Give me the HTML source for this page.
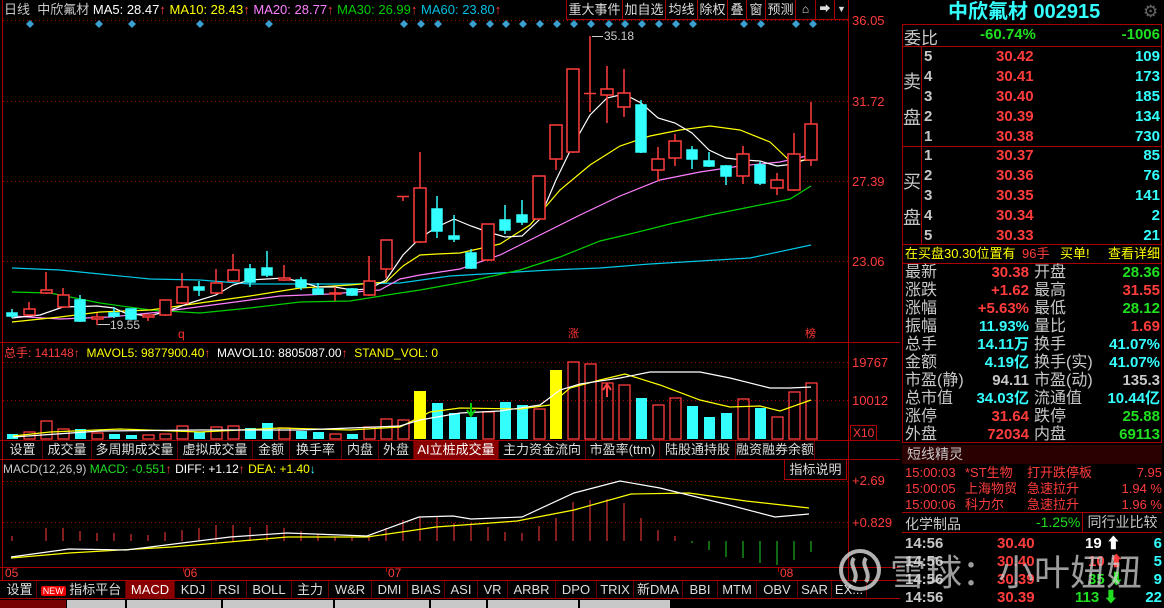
<!DOCTYPE html>
<html><head><meta charset="utf-8"><style>
*{margin:0;padding:0;box-sizing:border-box}
body{width:1164px;height:608px;background:#000;overflow:hidden;position:relative;font-family:"Liberation Sans","Noto Sans CJK SC",sans-serif;color:#c8c8c8}
.a{position:absolute;white-space:nowrap}
.tb{position:absolute;top:0;height:20px;border:1px solid #a00;border-top:none;color:#ddd;font-size:13px;line-height:19px;text-align:center;background:#000}
.r{color:#ff3c3c}.g{color:#1fe01f}.c{color:#3ff}.y{color:#ff0}.w{color:#fff}.gr{color:#c8c8c8}
.tab{position:absolute;top:441px;height:18px;line-height:18px;font-size:13px;color:#ddd;text-align:center;border-right:1px solid #600}
.bt{position:absolute;top:581px;height:18px;line-height:18px;font-size:13px;color:#ddd;text-align:center;border-right:1px solid #600}
.st span{font-size:16px}
.st b{font-size:15px}
</style></head><body>
<svg class="a" style="left:0;top:0" width="900" height="608">
<g stroke="#a00" fill="none">
<line x1="2.5" y1="0" x2="2.5" y2="580"/>
<line x1="848.5" y1="0" x2="848.5" y2="580"/>
<line x1="0" y1="342.5" x2="900" y2="342.5"/>
<line x1="0" y1="440.5" x2="900" y2="440.5"/>
<line x1="0" y1="459.5" x2="900" y2="459.5"/>
<line x1="0" y1="567.5" x2="900" y2="567.5"/>
<line x1="0" y1="580.5" x2="900" y2="580.5"/>
<line x1="0" y1="598.5" x2="900" y2="598.5"/>
</g>
<g stroke="#a00" stroke-dasharray="1,3">
<line x1="3" y1="20.5" x2="848" y2="20.5"/>
<line x1="3" y1="101.5" x2="848" y2="101.5"/>
<line x1="3" y1="181.5" x2="848" y2="181.5"/>
<line x1="3" y1="261.5" x2="848" y2="261.5"/>
<line x1="3" y1="362.5" x2="848" y2="362.5"/>
<line x1="3" y1="400.5" x2="848" y2="400.5"/>
<line x1="3" y1="481.5" x2="848" y2="481.5"/>
<line x1="3" y1="522.5" x2="848" y2="522.5"/>
</g>
<g fill="#3aa0d0">
<path d="M30 20l4 4-4 4-4-4zM99 20l4 4-4 4-4-4zM132 20l4 4-4 4-4-4zM200 20l4 4-4 4-4-4zM269 20l4 4-4 4-4-4zM404 20l4 4-4 4-4-4zM421 20l4 4-4 4-4-4zM438 20l4 4-4 4-4-4zM473 20l4 4-4 4-4-4zM490 20l4 4-4 4-4-4zM506 20l4 4-4 4-4-4zM523 20l4 4-4 4-4-4zM540 20l4 4-4 4-4-4zM557 20l4 4-4 4-4-4zM574 20l4 4-4 4-4-4zM591 20l4 4-4 4-4-4zM609 20l4 4-4 4-4-4zM625 20l4 4-4 4-4-4zM642 20l4 4-4 4-4-4zM659 20l4 4-4 4-4-4zM676 20l4 4-4 4-4-4zM693 20l4 4-4 4-4-4zM744 20l4 4-4 4-4-4zM761 20l4 4-4 4-4-4zM796 20l4 4-4 4-4-4zM813 20l4 4-4 4-4-4z"/>
</g>
<g fill="none" stroke-width="1.2">
<polyline stroke="#00c8e6" points="12,268 60,270 100,274 150,279 200,280 250,284 300,284 350,284 400,283 450,276 500,273 550,270 600,268 650,264 700,261 750,258 811,245"/>
<polyline stroke="#00d000" points="12,292 50,293 100,303 150,310 200,313 250,308 300,302 350,301 400,293 420,290 470,281 520,270 560,257 600,241 630,234 670,224 710,215 750,207 790,199 811,186"/>
<polyline stroke="#ff80ff" points="12,316 60,319 110,317 160,312 220,304 280,296 330,294 380,290 400,279 420,275 460,269 500,255 540,235 580,215 620,196 660,180 700,172 740,166 780,162 811,155"/>
<polyline stroke="#ffff00" points="12,322 60,317 100,312 150,310 200,303 250,296 300,288 350,285 386,282 403,266 420,255 437,254 460,253 500,244 530,225 560,190 590,165 620,146 650,136 680,130 710,126 740,130 770,142 790,161 811,160"/>
<polyline stroke="#ffffff" points="12,318 40,315 63,307 97,306 114,308 125,313 148,316 165,312 190,303 216,295 233,285 250,280 284,278 301,282 318,287 335,287 352,290 369,289 386,280 403,255 420,238 437,227 454,219 471,226 488,232 505,237 522,236 539,220 556,180 573,145 590,115 607,98 624,94 641,103 658,118 675,123 692,133 709,150 726,158 743,160 760,161 777,166 794,164 811,157"/>
</g>
<g stroke-width="1.5">
<g stroke="#3ff" fill="#3ff">
<line x1="12" y1="309" x2="12" y2="318"/><rect x="7" y="313" width="10" height="3"/>
<line x1="80" y1="295" x2="80" y2="322"/><rect x="75" y="300" width="10" height="21"/>
<line x1="114" y1="307" x2="114" y2="318"/><rect x="109" y="313" width="10" height="3"/>
<line x1="131" y1="309" x2="131" y2="320"/><rect x="126" y="309" width="10" height="10"/>
<line x1="199" y1="281" x2="199" y2="296"/><rect x="194" y="287" width="10" height="3"/>
<line x1="250" y1="264" x2="250" y2="287"/><rect x="245" y="269" width="10" height="13"/>
<line x1="267" y1="251" x2="267" y2="277"/><rect x="262" y="268" width="10" height="7"/>
<line x1="301" y1="277" x2="301" y2="290"/><rect x="296" y="280" width="10" height="7"/>
<line x1="318" y1="283" x2="318" y2="295"/><rect x="313" y="289" width="10" height="5"/>
<line x1="352" y1="288" x2="352" y2="296"/><rect x="347" y="289" width="10" height="6"/>
<line x1="437" y1="196" x2="437" y2="238"/><rect x="432" y="209" width="10" height="22"/>
<line x1="454" y1="215" x2="454" y2="242"/><rect x="449" y="236" width="10" height="3"/>
<line x1="471" y1="249" x2="471" y2="269"/><rect x="466" y="253" width="10" height="15"/>
<line x1="505" y1="205" x2="505" y2="234"/><rect x="500" y="220" width="10" height="10"/>
<line x1="522" y1="200" x2="522" y2="225"/><rect x="517" y="215" width="10" height="7"/>
<line x1="641" y1="100" x2="641" y2="153"/><rect x="636" y="105" width="10" height="47"/>
<line x1="692" y1="146" x2="692" y2="169"/><rect x="687" y="150" width="10" height="9"/>
<line x1="709" y1="152" x2="709" y2="167"/><rect x="704" y="161" width="10" height="5"/>
<line x1="726" y1="165" x2="726" y2="185"/><rect x="721" y="166" width="10" height="10"/>
<line x1="760" y1="162" x2="760" y2="185"/><rect x="755" y="165" width="10" height="18"/>
</g>
<g stroke="#ff3c3c" fill="#000">
<line x1="29" y1="302" x2="29" y2="316"/><rect x="24" y="309" width="11" height="6"/>
<line x1="46" y1="272" x2="46" y2="294"/><rect x="41" y="290" width="11" height="3"/>
<line x1="63" y1="288" x2="63" y2="308"/><rect x="58" y="295" width="11" height="12"/>
<line x1="97" y1="313" x2="97" y2="325"/><rect x="92" y="317" width="11" height="2"/>
<line x1="148" y1="315" x2="148" y2="321"/><rect x="143" y="315" width="11" height="2"/>
<line x1="165" y1="300" x2="165" y2="316"/><rect x="160" y="300" width="11" height="15"/>
<line x1="182" y1="273" x2="182" y2="304"/><rect x="177" y="287" width="11" height="16"/>
<line x1="216" y1="269" x2="216" y2="294"/><rect x="211" y="283" width="11" height="10"/>
<line x1="233" y1="254" x2="233" y2="282"/><rect x="228" y="270" width="11" height="11"/>
<line x1="284" y1="265" x2="284" y2="281"/><rect x="279" y="278" width="11" height="2"/>
<line x1="335" y1="287" x2="335" y2="301"/><rect x="330" y="293" width="11" height="1"/>
<line x1="369" y1="256" x2="369" y2="296"/><rect x="364" y="281" width="11" height="14"/>
<line x1="386" y1="240" x2="386" y2="278"/><rect x="381" y="240" width="11" height="29"/>
<line x1="403" y1="196" x2="403" y2="201"/><line x1="397" y1="196.5" x2="409" y2="196.5"/>
<line x1="420" y1="152" x2="420" y2="243"/><rect x="414" y="188" width="12" height="54"/>
<line x1="488" y1="224" x2="488" y2="261"/><rect x="482" y="224" width="12" height="36"/>
<line x1="539" y1="176" x2="539" y2="220"/><rect x="533" y="176" width="12" height="43"/>
<line x1="556" y1="125" x2="556" y2="170"/><rect x="550" y="125" width="12" height="34"/>
<line x1="573" y1="69" x2="573" y2="153"/><rect x="567" y="69" width="12" height="83"/>
<line x1="590" y1="36" x2="590" y2="112"/><line x1="584" y1="93.5" x2="596" y2="93.5"/>
<line x1="607" y1="66" x2="607" y2="123"/><rect x="601" y="89" width="12" height="6"/>
<line x1="624" y1="69" x2="624" y2="117"/><rect x="618" y="93" width="12" height="14"/>
<line x1="658" y1="147" x2="658" y2="181"/><rect x="652" y="159" width="12" height="11"/>
<line x1="675" y1="134" x2="675" y2="166"/><rect x="669" y="141" width="12" height="17"/>
<line x1="743" y1="146" x2="743" y2="184"/><rect x="737" y="154" width="12" height="22"/>
<line x1="777" y1="173" x2="777" y2="195"/><rect x="771" y="180" width="12" height="8"/>
<line x1="794" y1="133" x2="794" y2="191"/><rect x="788" y="154" width="12" height="36"/>
<line x1="811" y1="102" x2="811" y2="166"/><rect x="805" y="124" width="12" height="36"/>
</g>
</g>
<g stroke="#ccc"><line x1="592" y1="36.5" x2="603" y2="36.5"/><line x1="98" y1="324.5" x2="110" y2="324.5"/></g>
<text x="604" y="40" fill="#ccc" font-size="12">35.18</text>
<text x="110" y="329" fill="#ccc" font-size="12">19.55</text>
<text x="178" y="338" fill="#f33" font-size="12">q</text>
<text x="568" y="337" fill="#f33" font-size="11">涨</text>
<text x="805" y="337" fill="#f33" font-size="11">榜</text>
<g stroke-width="1.3">
<g fill="#3ff">
<rect x="7" y="434" width="11" height="5"/><rect x="75" y="429" width="11" height="10"/><rect x="109" y="434" width="11" height="5"/><rect x="126" y="435" width="11" height="4"/><rect x="194" y="432" width="11" height="7"/><rect x="245" y="428" width="11" height="11"/><rect x="262" y="423" width="11" height="16"/><rect x="296" y="431" width="11" height="8"/><rect x="313" y="432" width="11" height="7"/><rect x="347" y="434" width="11" height="5"/><rect x="432" y="403" width="11" height="36"/><rect x="449" y="413" width="11" height="26"/><rect x="466" y="417" width="11" height="22"/><rect x="500" y="402" width="11" height="37"/><rect x="517" y="405" width="11" height="34"/><rect x="636" y="398" width="11" height="41"/><rect x="687" y="406" width="11" height="33"/><rect x="704" y="417" width="11" height="22"/><rect x="721" y="413" width="11" height="26"/><rect x="755" y="408" width="11" height="31"/>
</g>
<g fill="#ff0"><rect x="414" y="391" width="12" height="48"/><rect x="550" y="370" width="12" height="69"/></g>
<g fill="none" stroke="#ff3c3c">
<rect x="24" y="432" width="11" height="7"/><rect x="41" y="421" width="11" height="18"/><rect x="58" y="429" width="11" height="10"/><rect x="92" y="433" width="11" height="6"/><rect x="143" y="435" width="11" height="4"/><rect x="160" y="434" width="11" height="5"/><rect x="177" y="426" width="11" height="13"/><rect x="211" y="427" width="11" height="12"/><rect x="228" y="426" width="11" height="13"/><rect x="279" y="428" width="11" height="11"/><rect x="330" y="434" width="11" height="5"/><rect x="364" y="427" width="11" height="12"/><rect x="381" y="419" width="11" height="20"/><rect x="398" y="420" width="11" height="19"/><rect x="483" y="412" width="11" height="27"/><rect x="534" y="409" width="11" height="30"/><rect x="568" y="362" width="11" height="77"/><rect x="585" y="364" width="11" height="75"/><rect x="602" y="383" width="11" height="56"/><rect x="619" y="385" width="11" height="54"/><rect x="653" y="405" width="11" height="34"/><rect x="670" y="398" width="11" height="41"/><rect x="738" y="399" width="11" height="40"/><rect x="772" y="417" width="11" height="22"/><rect x="789" y="392" width="11" height="47"/><rect x="806" y="383" width="11" height="56"/>
</g>
</g>
<g fill="none" stroke-width="1.2">
<polyline stroke="#ff0" points="13,436 50,432 120,429 200,432 280,428 350,430 400,427 430,412 460,408 520,409 550,405 570,388 600,380 625,374 660,385 700,400 730,407 760,406 780,411 811,400"/>
<polyline stroke="#fff" points="13,437 100,431 200,430 300,430 400,426 420,420 460,413 500,411 540,405 560,390 580,384 620,378 650,372 700,372 730,378 770,388 790,388 811,387"/>
</g>
<path d="M471 403v11M467 410l4 6 4-6" stroke="#0c0" stroke-width="2" fill="none"/>
<path d="M607 397v-11M603 390l4-6 4 6" stroke="#f44" stroke-width="2" fill="none"/>
<g stroke="#ff3c3c" stroke-width="1">
<path d="M12 541V536M46 541V528M63 541V528M80 541V531M97 541V533M114 541V533M131 541V534M148 541V535M165 541V532M182 541V530M199 541V528M216 541V525M233 541V525M250 541V527M267 541V525M284 541V528M301 541V531M318 541V534M335 541V537M352 541V537M369 541V537M386 541V528M403 541V520M420 541V517M437 541V516M454 541V523M471 541V523M488 541V527M505 541V532M522 541V533M539 541V526M556 541V518M573 541V502M590 541V500M607 541V499M624 541V503M641 541V518M658 541V530M675 541V536"/>
</g>
<g stroke="#1fd01f"><path d="M692 541V543M709 541V550M726 541V557M743 541V558M760 541V563M777 541V565M794 541V560M811 541V552"/></g>
<g fill="none" stroke-width="1.2">
<polyline stroke="#ff0" points="11,558 69,553 172,547 287,537 367,537 436,527 517,521 574,510 631,494 689,493 746,501 809,508"/>
<polyline stroke="#fff" points="11,557 69,549 126,550 230,537 287,533 367,536 419,517 453,516 471,519 522,517 574,493 620,481 660,488 729,505 775,517 809,514"/>
</g>
<g stroke="#a00"><line x1="183.5" y1="567" x2="183.5" y2="572"/><line x1="386.5" y1="567" x2="386.5" y2="572"/><line x1="778.5" y1="567" x2="778.5" y2="572"/></g>
</svg>

<div class="a" style="left:4px;top:2px;font-size:13px;line-height:16px"><span class="gr">日线&nbsp; 中欣氟材</span> <span class="w">MA5: 28.47</span><span class="r">↑</span> <span class="y">MA10: 28.43</span><span class="r">↑</span> <span style="color:#ff80ff">MA20: 28.77</span><span class="r">↑</span> <span style="color:#0c0">MA30: 26.99</span><span class="r">↑</span> <span style="color:#00c0e0">MA60: 23.80</span><span class="r">↑</span></div>
<div class="tb" style="left:566px;width:57px">重大事件</div>
<div class="tb" style="left:622px;width:44px">加自选</div>
<div class="tb" style="left:665px;width:33px">均线</div>
<div class="tb" style="left:697px;width:31px">除权</div>
<div class="tb" style="left:727px;width:20px">叠</div>
<div class="tb" style="left:746px;width:20px">窗</div>
<div class="tb" style="left:765px;width:31px">预测</div>
<div class="tb" style="left:795px;width:21px;font-size:12px">⌂</div>
<div class="tb" style="left:815px;width:20px;font-size:11px">➡</div>
<div class="tb" style="left:834px;width:15px;font-size:9px">▼</div>
<div class="a r" style="left:852px;top:13px;font-size:13px">36.05</div>
<div class="a r" style="left:852px;top:94px;font-size:13px">31.72</div>
<div class="a r" style="left:852px;top:174px;font-size:13px">27.39</div>
<div class="a r" style="left:852px;top:254px;font-size:13px">23.06</div>
<div class="a" style="left:4px;top:344px;font-size:12px"><span class="r">总手: 141148↑</span>&nbsp; <span class="y">MAVOL5: 9877900.40</span><span class="r">↑</span>&nbsp; <span class="w">MAVOL10: 8805087.00</span><span class="r">↑</span>&nbsp; <span class="y">STAND_VOL: 0</span></div>
<div class="a r" style="left:852px;top:355px;font-size:13px">19767</div>
<div class="a r" style="left:852px;top:393px;font-size:13px">10012</div>
<div class="a r" style="left:850px;top:425px;font-size:12px;border:1px solid #a00;padding:0 2px">X10</div>
<div class="tab" style="left:3px;width:40px">设置</div>
<div class="tab" style="left:43px;width:49px">成交量</div>
<div class="tab" style="left:92px;width:86px">多周期成交量</div>
<div class="tab" style="left:178px;width:75px">虚拟成交量</div>
<div class="tab" style="left:253px;width:37px">金额</div>
<div class="tab" style="left:290px;width:52px">换手率</div>
<div class="tab" style="left:342px;width:37px">内盘</div>
<div class="tab" style="left:379px;width:35px">外盘</div>
<div class="tab" style="left:414px;width:85px;background:#800;color:#fff">AI立桩成交量</div>
<div class="tab" style="left:499px;width:87px">主力资金流向</div>
<div class="tab" style="left:586px;width:74px">市盈率(ttm)</div>
<div class="tab" style="left:660px;width:76px">陆股通持股</div>
<div class="tab" style="left:736px;width:79px">融资融券余额</div>
<div class="a" style="left:3px;top:462px;font-size:12px"><span class="gr">MACD(12,26,9)</span> <span class="g">MACD: -0.551</span><span class="r">↑</span> <span class="w">DIFF: +1.12</span><span class="r">↑</span> <span class="y">DEA: +1.40</span><span class="c">↓</span></div>
<div class="a" style="left:784px;top:460px;width:63px;height:20px;border:1px solid #a00;border-top:none;font-size:13px;line-height:19px;text-align:center;color:#ddd">指标说明</div>
<div class="a r" style="left:852px;top:473px;font-size:13px">+2.69</div>
<div class="a r" style="left:852px;top:515px;font-size:13px">+0.829</div>
<div class="a r" style="left:5px;top:566px;font-size:12px">05</div>
<div class="a r" style="left:184px;top:566px;font-size:12px">06</div>
<div class="a r" style="left:388px;top:566px;font-size:12px">07</div>
<div class="a r" style="left:780px;top:566px;font-size:12px">08</div>
<div class="bt" style="left:3px;width:34px">设置</div>
<div class="bt" style="left:37px;width:89px"><span style="background:#e00;color:#fff;font-size:9px;padding:0 2px;border-radius:2px">NEW</span> 指标平台</div>
<div class="bt" style="left:126px;width:49px;background:#800;color:#fff">MACD</div>
<div class="bt" style="left:175px;width:37px">KDJ</div>
<div class="bt" style="left:212px;width:35px">RSI</div>
<div class="bt" style="left:247px;width:45px">BOLL</div>
<div class="bt" style="left:292px;width:37px">主力</div>
<div class="bt" style="left:329px;width:43px">W&amp;R</div>
<div class="bt" style="left:372px;width:36px">DMI</div>
<div class="bt" style="left:408px;width:37px">BIAS</div>
<div class="bt" style="left:445px;width:33px">ASI</div>
<div class="bt" style="left:478px;width:30px">VR</div>
<div class="bt" style="left:508px;width:48px">ARBR</div>
<div class="bt" style="left:556px;width:41px">DPO</div>
<div class="bt" style="left:597px;width:37px">TRIX</div>
<div class="bt" style="left:634px;width:49px">新DMA</div>
<div class="bt" style="left:683px;width:35px">BBI</div>
<div class="bt" style="left:718px;width:39px">MTM</div>
<div class="bt" style="left:757px;width:41px">OBV</div>
<div class="bt" style="left:798px;width:34px">SAR</div>
<div class="bt" style="left:832px;width:35px">EX...</div>
<div class="a" style="left:0;top:600px;width:900px;height:8px;background:#000">
<div class="a" style="left:0;top:0;width:66px;height:8px;background:#700"></div>
<div class="a" style="left:67px;top:0;width:58px;height:8px;background:#c8c8c8"></div>
<div class="a" style="left:127px;top:0;width:94px;height:8px;background:#c8c8c8"></div>
<div class="a" style="left:223px;top:0;width:110px;height:8px;background:#c8c8c8"></div>
<div class="a" style="left:335px;top:0;width:94px;height:8px;background:#c8c8c8"></div>
<div class="a" style="left:431px;top:0;width:55px;height:8px;background:#c8c8c8"></div>
<div class="a" style="left:488px;top:0;width:90px;height:8px;background:#c8c8c8"></div>
<div class="a" style="left:580px;top:0;width:90px;height:8px;background:#c8c8c8"></div>
</div>

<div class="a c" style="left:948px;top:0px;font-size:20px;font-weight:bold;line-height:24px">中欣氟材 002915</div>
<div class="a" style="left:1143px;top:2px;font-size:17px;color:#666">⚙</div>
<div class="a" style="left:902px;top:24px;width:260px;height:419px;border:1px solid #a00"></div>
<div class="a" style="left:902px;top:46px;width:260px;border-top:1px solid #a00"></div>
<div class="a" style="left:902px;top:146px;width:260px;border-top:1px solid #a00"></div>
<div class="a" style="left:902px;top:244px;width:260px;border-top:1px solid #a00"></div>
<div class="a" style="left:902px;top:263px;width:260px;border-top:1px solid #a00"></div>
<div class="a" style="left:921px;top:46px;height:198px;border-left:1px solid #a00"></div>
<div class="a gr" style="left:904px;top:24px;font-size:17px">委比</div>
<div class="a g" style="left:980px;top:26px;font-size:15px;font-weight:bold">-60.74%</div>
<div class="a g" style="left:1100px;top:26px;width:60px;text-align:right;font-size:15px;font-weight:bold">-1006</div>
<div class="a gr" style="left:903px;top:64px;font-size:18px;line-height:36px">卖<br>盘</div>
<div class="a gr" style="left:903px;top:164px;font-size:18px;line-height:36px">买<br>盘</div>
<div class="a" style="left:924px;top:47px;width:236px;font-size:15px;font-weight:bold;line-height:20px">
<div style="position:relative;height:20px"><span class="gr">5</span><span class="r" style="position:absolute;left:72px">30.42</span><span class="c" style="position:absolute;right:0">109</span></div>
<div style="position:relative;height:20px"><span class="gr">4</span><span class="r" style="position:absolute;left:72px">30.41</span><span class="c" style="position:absolute;right:0">173</span></div>
<div style="position:relative;height:20px"><span class="gr">3</span><span class="r" style="position:absolute;left:72px">30.40</span><span class="c" style="position:absolute;right:0">185</span></div>
<div style="position:relative;height:20px"><span class="gr">2</span><span class="r" style="position:absolute;left:72px">30.39</span><span class="c" style="position:absolute;right:0">134</span></div>
<div style="position:relative;height:20px"><span class="gr">1</span><span class="r" style="position:absolute;left:72px">30.38</span><span class="c" style="position:absolute;right:0">730</span></div>
<div style="position:relative;height:20px;margin-top:-1px"><span class="gr">1</span><span class="r" style="position:absolute;left:72px">30.37</span><span class="c" style="position:absolute;right:0">85</span></div>
<div style="position:relative;height:20px"><span class="gr">2</span><span class="r" style="position:absolute;left:72px">30.36</span><span class="c" style="position:absolute;right:0">76</span></div>
<div style="position:relative;height:20px"><span class="gr">3</span><span class="r" style="position:absolute;left:72px">30.35</span><span class="c" style="position:absolute;right:0">141</span></div>
<div style="position:relative;height:20px"><span class="gr">4</span><span class="r" style="position:absolute;left:72px">30.34</span><span class="c" style="position:absolute;right:0">2</span></div>
<div style="position:relative;height:20px"><span class="gr">5</span><span class="r" style="position:absolute;left:72px">30.33</span><span class="c" style="position:absolute;right:0">21</span></div>
</div>
<div class="a" style="left:905px;top:245px;width:255px;font-size:13px;line-height:18px;position:absolute"><span class="y">在买盘30.30位置有</span><span class="r" style="position:absolute;left:117px">96手</span><span class="y" style="position:absolute;left:155px">买单!</span><span class="y" style="position:absolute;right:0">查看详细</span></div>
<div class="a st" style="left:905px;top:264px;width:255px;line-height:18px">
<div style="position:relative;height:18px"><span class="gr">最新</span><b class="r" style="position:absolute;right:131px">30.38</b><span class="gr" style="position:absolute;left:129px">开盘</span><b class="g" style="position:absolute;right:0">28.36</b></div>
<div style="position:relative;height:18px"><span class="gr">涨跌</span><b class="r" style="position:absolute;right:131px">+1.62</b><span class="gr" style="position:absolute;left:129px">最高</span><b class="r" style="position:absolute;right:0">31.55</b></div>
<div style="position:relative;height:18px"><span class="gr">涨幅</span><b class="r" style="position:absolute;right:131px">+5.63%</b><span class="gr" style="position:absolute;left:129px">最低</span><b class="g" style="position:absolute;right:0">28.12</b></div>
<div style="position:relative;height:18px"><span class="gr">振幅</span><b class="c" style="position:absolute;right:131px">11.93%</b><span class="gr" style="position:absolute;left:129px">量比</span><b class="r" style="position:absolute;right:0">1.69</b></div>
<div style="position:relative;height:18px"><span class="gr">总手</span><b class="c" style="position:absolute;right:131px">14.11万</b><span class="gr" style="position:absolute;left:129px">换手</span><b class="c" style="position:absolute;right:0">41.07%</b></div>
<div style="position:relative;height:18px"><span class="gr">金额</span><b class="c" style="position:absolute;right:131px">4.19亿</b><span class="gr" style="position:absolute;left:129px">换手(实)</span><b class="c" style="position:absolute;right:0">41.07%</b></div>
<div style="position:relative;height:18px"><span class="gr">市盈(静)</span><b class="gr" style="position:absolute;right:131px">94.11</b><span class="gr" style="position:absolute;left:129px">市盈(动)</span><b class="gr" style="position:absolute;right:0">135.3</b></div>
<div style="position:relative;height:18px"><span class="gr">总市值</span><b class="c" style="position:absolute;right:131px">34.03亿</b><span class="gr" style="position:absolute;left:129px">流通值</span><b class="c" style="position:absolute;right:0">10.44亿</b></div>
<div style="position:relative;height:18px"><span class="gr">涨停</span><b class="r" style="position:absolute;right:131px">31.64</b><span class="gr" style="position:absolute;left:129px">跌停</span><b class="g" style="position:absolute;right:0">25.88</b></div>
<div style="position:relative;height:18px"><span class="gr">外盘</span><b class="r" style="position:absolute;right:131px">72034</b><span class="gr" style="position:absolute;left:129px">内盘</span><b class="g" style="position:absolute;right:0">69113</b></div>
</div>
<div class="a" style="left:902px;top:445px;width:260px;height:19px;background:#2a0000;font-size:14px;line-height:19px;padding-left:5px"><span class="gr">短线精灵</span></div>
<div class="a r" style="left:905px;top:465px;width:257px;font-size:13px;line-height:16px">
<div style="position:relative;height:16px">15:00:03<span style="position:absolute;left:60px">*ST生物</span><span style="position:absolute;left:122px">打开跌停板</span><span style="position:absolute;right:0">7.95</span></div>
<div style="position:relative;height:16px">15:00:05<span style="position:absolute;left:60px">上海物贸</span><span style="position:absolute;left:122px">急速拉升</span><span style="position:absolute;right:0">1.94 %</span></div>
<div style="position:relative;height:16px">15:00:06<span style="position:absolute;left:60px">科力尔</span><span style="position:absolute;left:122px">急速拉升</span><span style="position:absolute;right:0">1.96 %</span></div>
</div>
<div class="a" style="left:902px;top:512px;width:260px;border-top:1px solid #a00;border-bottom:1px solid #a00;height:21px"></div>
<div class="a gr" style="left:905px;top:514px;font-size:14px">化学制品</div>
<div class="a g" style="left:1036px;top:514px;font-size:14px">-1.25%</div>
<div class="a gr" style="left:1082px;top:512px;width:80px;height:21px;border-left:1px solid #a00;font-size:14px;line-height:21px;text-align:center">同行业比较</div>
<div class="a" style="left:905px;top:535px;width:257px;font-size:15px;font-weight:bold;line-height:18px">
<div style="position:relative;height:18px"><span class="gr">14:56</span><span class="r" style="position:absolute;left:92px">30.40</span><span class="w" style="position:absolute;left:180px">19 ⬆</span><span class="c" style="position:absolute;right:0">6</span></div>
<div style="position:relative;height:18px"><span class="gr">14:56</span><span class="r" style="position:absolute;left:92px">30.40</span><span class="r" style="position:absolute;left:183px">10 ⬆</span><span class="c" style="position:absolute;right:0">5</span></div>
<div style="position:relative;height:18px"><span class="gr">14:56</span><span class="r" style="position:absolute;left:92px">30.39</span><span class="g" style="position:absolute;left:183px">35 ⬇</span><span class="c" style="position:absolute;right:0">9</span></div>
<div style="position:relative;height:18px"><span class="gr">14:56</span><span class="r" style="position:absolute;left:92px">30.39</span><span class="g" style="position:absolute;left:170px">113 ⬇</span><span class="c" style="position:absolute;right:0">22</span></div>
</div>
<svg class="a" style="left:838px;top:548px" width="46" height="46"><circle cx="22" cy="22" r="19" fill="none" stroke="rgba(220,220,220,0.8)" stroke-width="4"/><path d="M16 10c-6 8 6 14 0 24M28 10c-6 8 6 14 0 24" fill="none" stroke="rgba(220,220,220,0.8)" stroke-width="4"/></svg>
<div class="a" style="left:890px;top:548px;font-size:36px;line-height:44px;color:rgba(210,210,210,0.75);font-family:'Noto Sans CJK SC',sans-serif">雪球：小叶妞妞</div>
</body></html>
